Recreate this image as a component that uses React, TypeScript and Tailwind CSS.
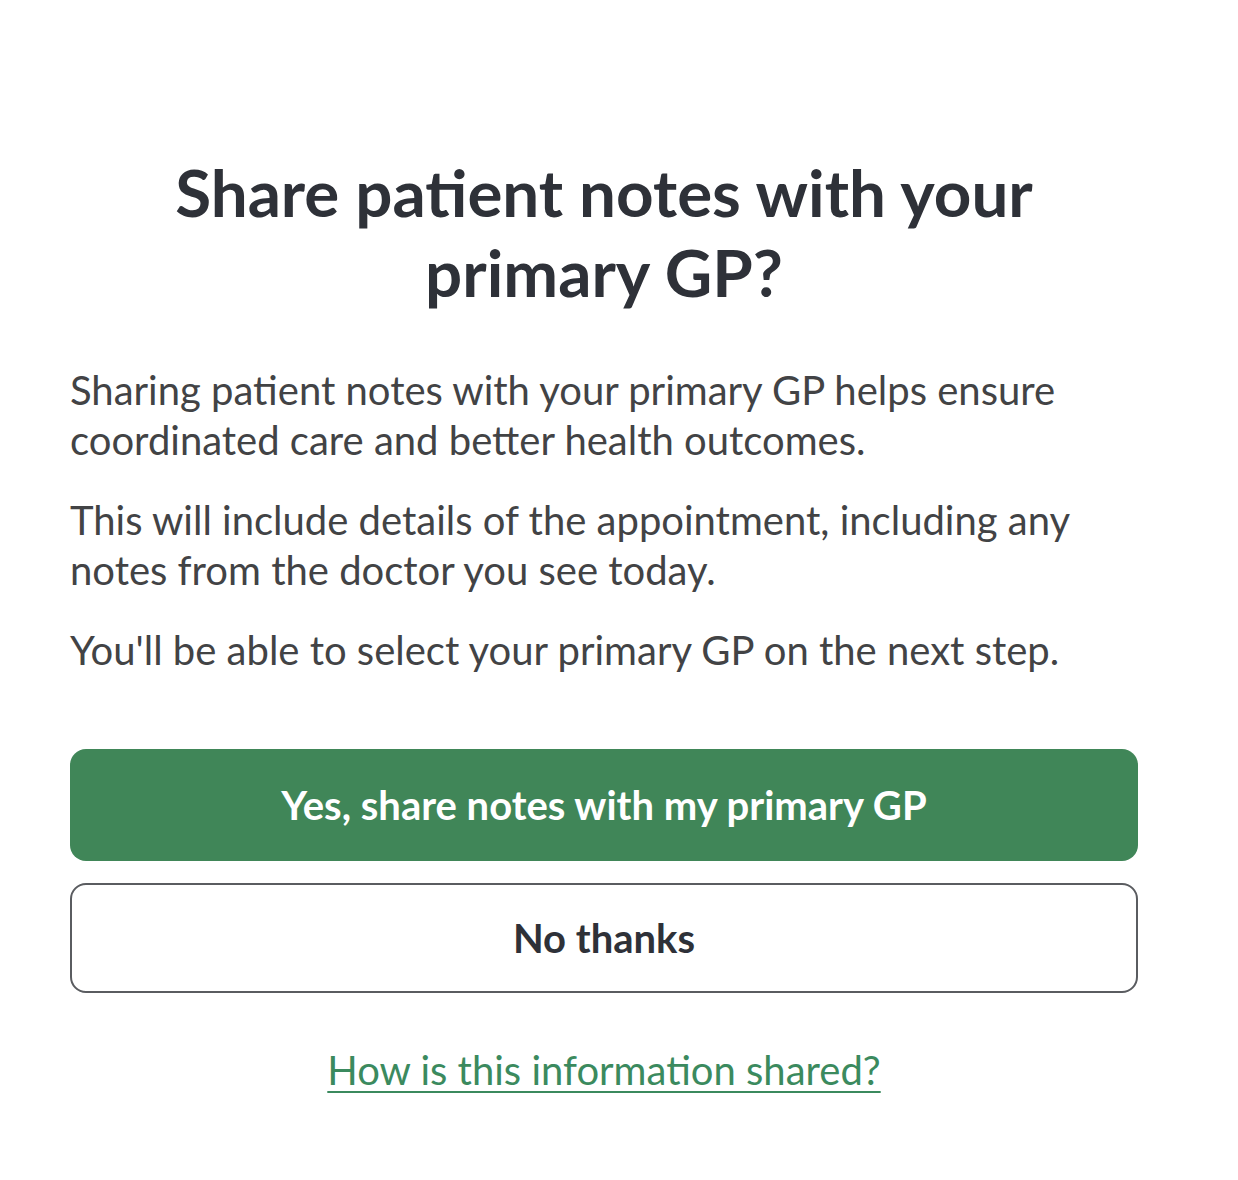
export default function App() {
    return (
        <div className="min-h-[1180px] bg-white font-['Lato','Liberation_Sans',sans-serif]">
            <div className="ml-[70px] w-[1068px] pt-[152px]">
                <h1 className="text-center text-[65.5px] font-bold leading-[80px] text-[#2e3138]">
                    Share patient notes with your
                    <br />
                    primary GP?
                </h1>

                <div className="mt-[53px] flex flex-col gap-[30px] text-[40px] leading-[50px] text-[#424345]">
                    <p>Sharing patient notes with your primary GP helps ensure coordinated care and better health outcomes.</p>
                    <p>This will include details of the appointment, including any notes from the doctor you see today.</p>
                    <p>You'll be able to select your primary GP on the next step.</p>
                </div>

                <div className="mt-[74px] flex flex-col gap-[22px]">
                    <button type="button" className="h-[112px] rounded-2xl bg-[#408658] text-[40px] font-bold text-white">
                        Yes, share notes with my primary GP
                    </button>
                    <button type="button" className="h-[110px] rounded-2xl border-2 border-[#5a5c60] bg-white text-[40px] font-bold text-[#2e3138]">
                        No thanks
                    </button>
                </div>

                <div className="mt-[52px] text-center text-[40px] leading-[50px]">
                    <a href="#" className="text-[#3b8a5e] underline decoration-2 underline-offset-[6px]">
                        How is this information shared?
                    </a>
                </div>
            </div>
        </div>
    );
}
